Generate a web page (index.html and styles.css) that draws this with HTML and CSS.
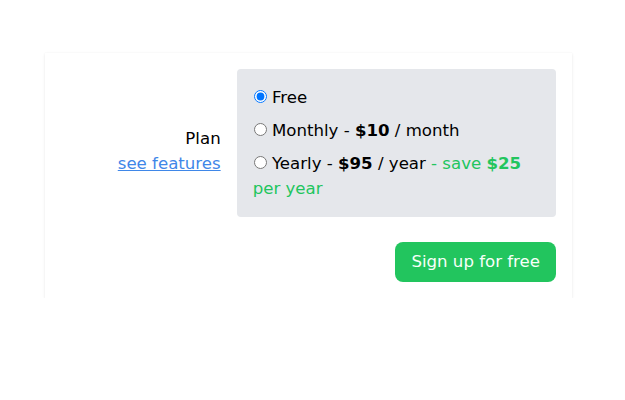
FILE: index.html
```html
<!DOCTYPE html>
<html>
<head>
<meta charset="utf-8">
<link rel="stylesheet" href="styles.css">
</head>
<body>
<div class="page">
  <form class="card">
    <div class="grid">
      <div class="label-col">
        <div class="label">Plan</div>
        <a class="link" href="#">see features</a>
      </div>
      <div class="options">
        <label class="option"><input type="radio" name="plan" checked> Free</label>
        <label class="option"><input type="radio" name="plan"> Monthly - <b>$10</b> / month</label>
        <label class="option"><input type="radio" name="plan"> Yearly - <b>$95</b> / year <span class="save">- save <b>$25</b> per year</span></label>
      </div>
    </div>
    <div class="actions">
      <button type="button" class="btn">Sign up for free</button>
    </div>
  </form>
</div>
</body>
</html>
```

FILE: styles.css
```css
html, body {
  margin: 0;
  padding: 0;
  background: #fff;
}
body {
  font-family: "DejaVu Sans", sans-serif;
  font-size: 16.6px;
  line-height: 25px;
  color: #000;
}
.page {
  padding: 53px 53px 0 45px;
}
.card {
  background: #fff;
  padding: 16px;
  box-shadow: 0 1px 3px rgba(0,0,0,0.08), 0 0 1px rgba(0,0,0,0.06);
}
.grid {
  display: grid;
  grid-template-columns: 1fr 2fr;
  gap: 16px;
}
.label-col {
  align-self: center;
  margin-top: 16px;
  text-align: right;
  display: flex;
  flex-direction: column;
  align-items: flex-end;
}
.link {
  color: #3f87e8;
  text-decoration: underline;
}
.options {
  background: #e5e7eb;
  border-radius: 4px;
  padding: 16px;
  display: flex;
  flex-direction: column;
  gap: 8px;
}
.option {
  display: block;
}
.option input {
  margin: 0 0 0 1px;
  width: 13px;
  height: 13px;
}
.save {
  color: #22c55e;
}
.actions {
  display: flex;
  justify-content: flex-end;
  margin-top: 25px;
}
.btn {
  font-family: "DejaVu Sans", sans-serif;
  font-size: 16.6px;
  line-height: 24px;
  background: #22c55e;
  color: #f7fff9;
  border: 0;
  border-radius: 8px;
  padding: 8px 16px;
}
```
